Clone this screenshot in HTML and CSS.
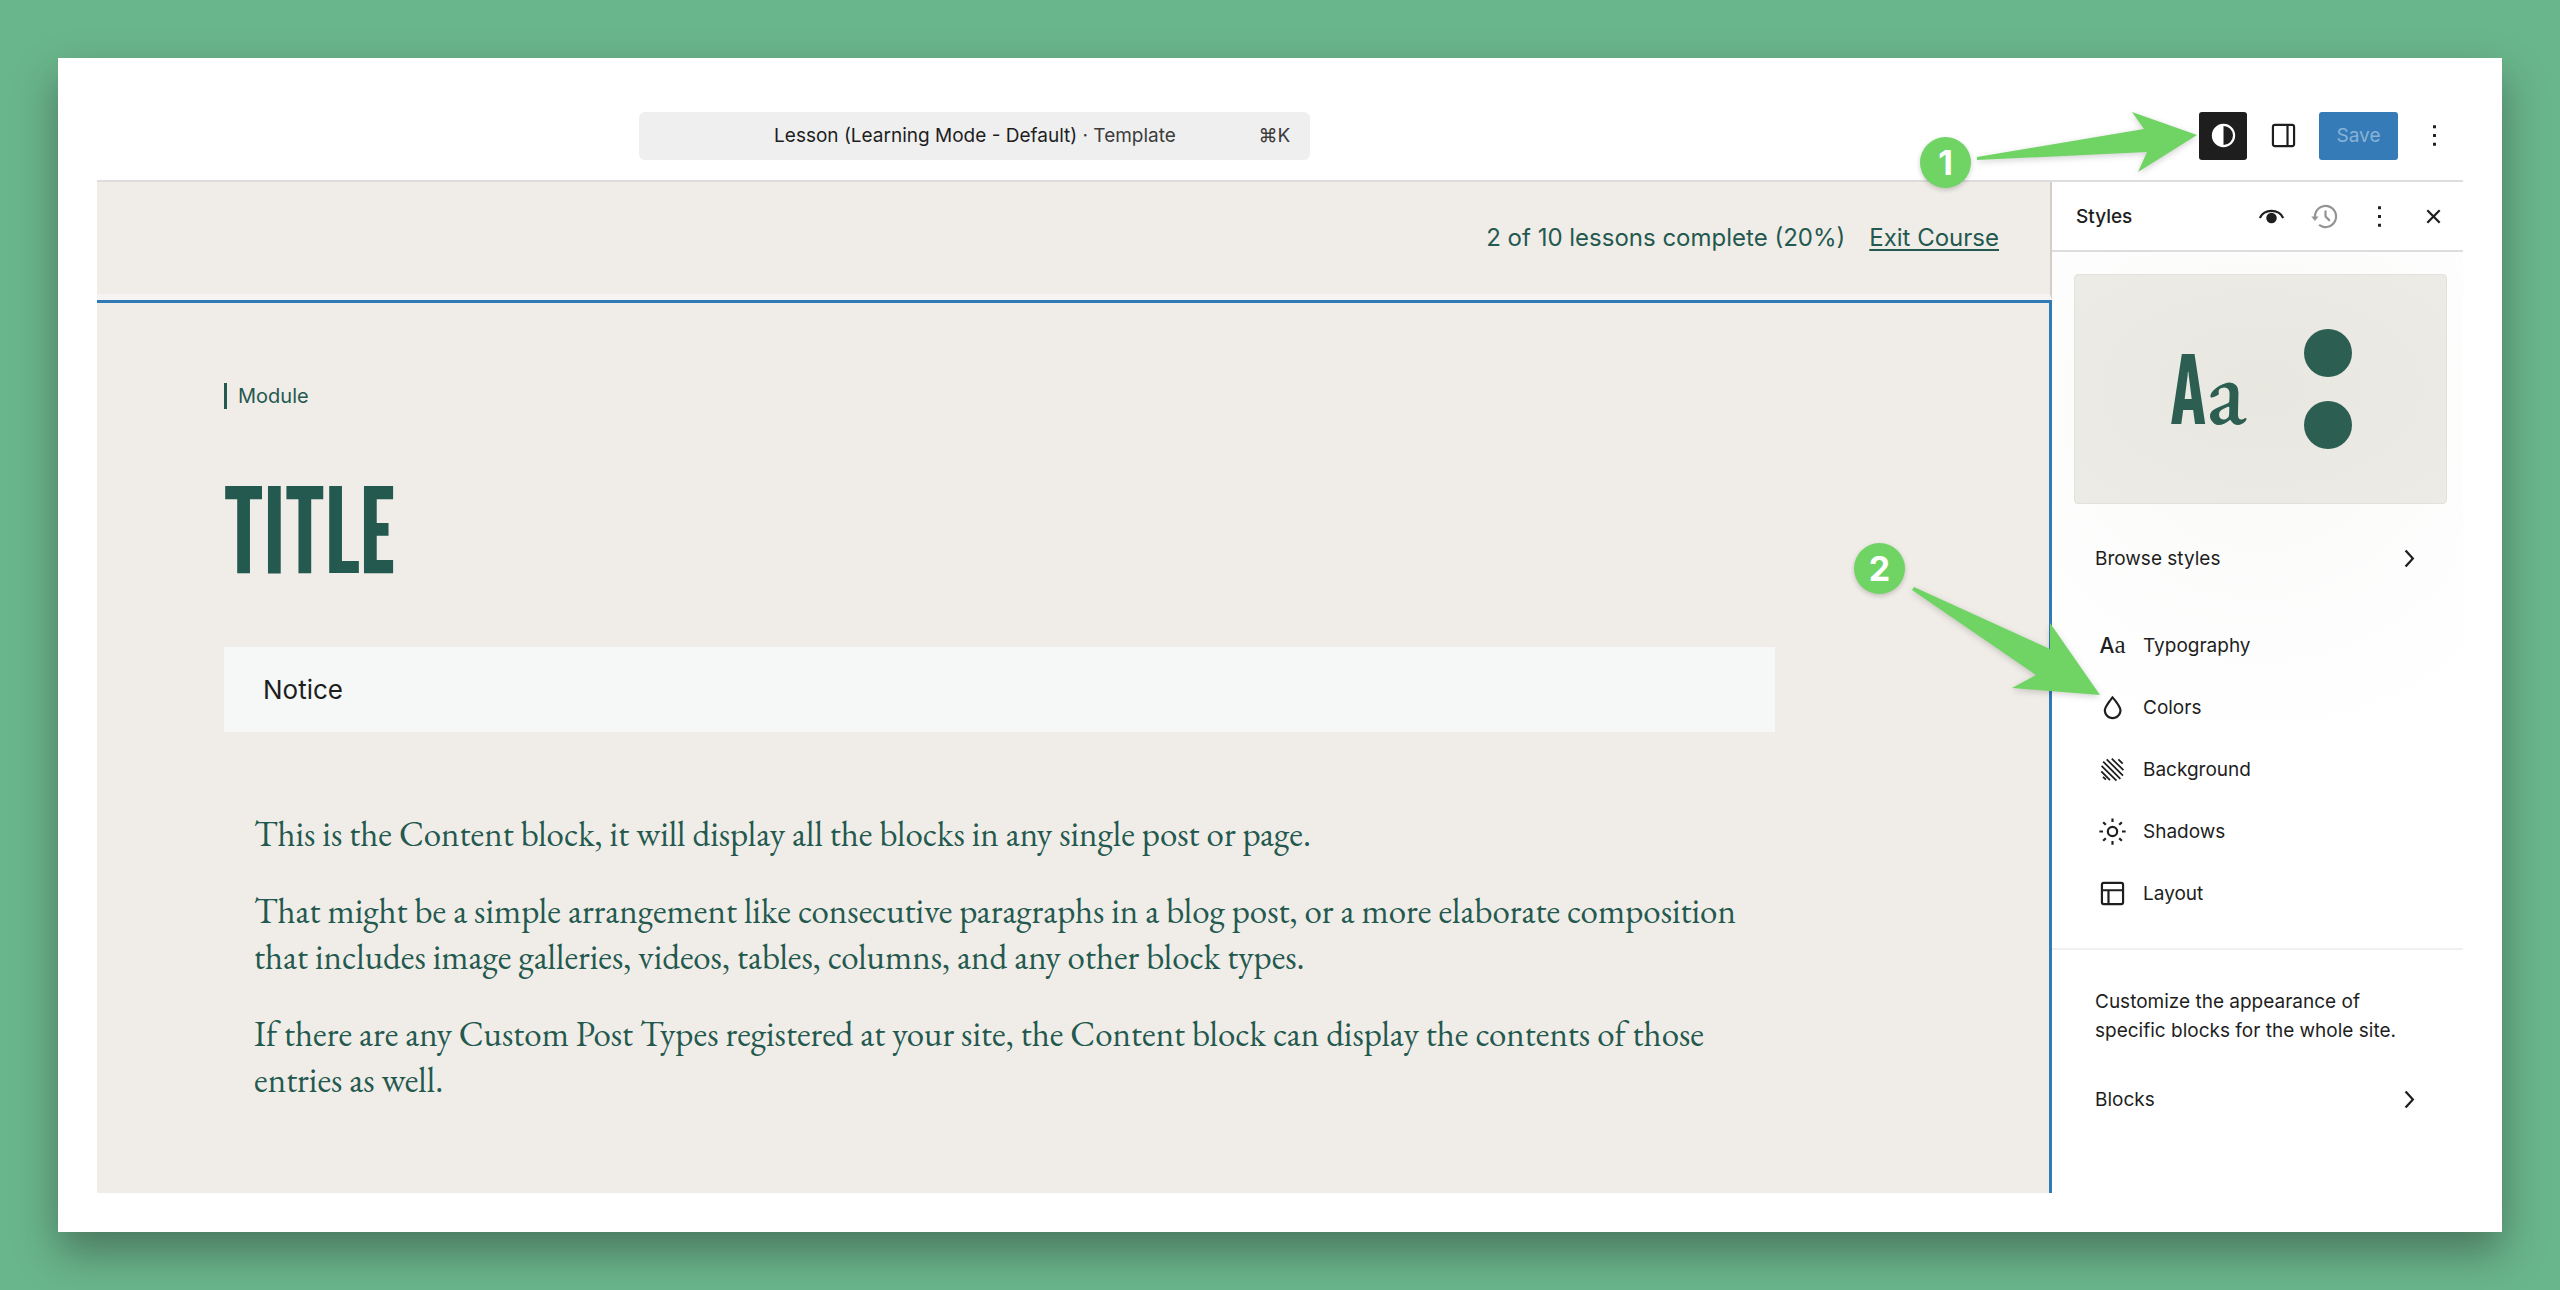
FILE: index.html
```html
<!DOCTYPE html>
<html lang="en">
<head>
  <meta charset="UTF-8">
  <meta name="viewport" content="width=device-width, initial-scale=1">
  <title>Lesson (Learning Mode - Default) · Template</title>
  <link rel="stylesheet" href="styles.css">
</head>
<body>
  <div class="card">
    <header class="topbar">
      <button class="command" type="button">
        <span class="command-title">Lesson (Learning Mode - Default) <span class="muted">· Template</span></span>
        <span class="muted">⌘K</span>
      </button>
      <div class="actions">
        <button class="icon-btn active" type="button" aria-label="Styles">
          <svg class="icon" viewBox="0 0 24 24"><path fill-rule="evenodd" d="M20 12a8 8 0 1 1-16 0 8 8 0 0 1 16 0Zm-1.5 0a6.5 6.5 0 0 1-6.5 6.5v-13a6.5 6.5 0 0 1 6.5 6.5Z"/></svg>
        </button>
        <button class="icon-btn" type="button" aria-label="Settings">
          <svg class="icon" viewBox="0 0 24 24"><path d="M18 4H6c-1.1 0-2 .9-2 2v12c0 1.1.9 2 2 2h12c1.1 0 2-.9 2-2V6c0-1.1-.9-2-2-2zm-4 14.5H6c-.3 0-.5-.2-.5-.5V6c0-.3.2-.5.5-.5h8v13zm4.5-.5c0 .3-.2.5-.5.5h-2.5v-13H18c.3 0 .5.2.5.5v12z"/></svg>
        </button>
        <button class="save" type="button">Save</button>
        <button class="icon-btn" type="button" aria-label="Options">
          <svg class="icon" viewBox="0 0 24 24"><path d="M13 19h-2v-2h2v2zm0-6h-2v-2h2v2zm0-6h-2V5h2v2z"/></svg>
        </button>
      </div>
    </header>

    <div class="editor">
      <main class="canvas">
        <div class="course-bar">
          <span>2 of 10 lessons complete (20%)</span>
          <a href="#">Exit Course</a>
        </div>
        <div class="lesson">
          <p class="module">Module</p>
          <h1 class="title">TITLE</h1>
          <div class="notice">Notice</div>
          <div class="content">
            <p>This is the Content block, it will display all the blocks in any single post or page.</p>
            <p>That might be a simple arrangement like consecutive paragraphs in a blog post, or a more elaborate composition that includes image galleries, videos, tables, columns, and any other block types.</p>
            <p>If there are any Custom Post Types registered at your site, the Content block can display the contents of those entries as well.</p>
          </div>
        </div>
      </main>

      <aside class="sidebar">
        <div class="sidebar-header">
          <h2>Styles</h2>
          <button class="icon-btn" type="button" aria-label="Style Book">
            <svg class="icon" viewBox="0 0 24 24"><path class="line" d="M4 13C5.2 10.6 8 8.2 12 8.2S18.800 10.600 20 13"/><circle cx="12" cy="13" r="3.600"/></svg>
          </button>
          <button class="icon-btn" type="button" aria-label="Revisions" disabled>
            <svg class="icon" viewBox="0 0 24 24"><path d="M5.5 12h1.75l-2.5 3-2.5-3H4a8 8 0 113.134 6.35l.907-1.194A6.5 6.5 0 105.5 12zm9.530 1.970l-2.280-2.280V8.500a.75.75 0 00-1.500 0V12a.747.747 0 00.218.529l2.500 2.500a.75.75 0 101.060-1.060z"/></svg>
          </button>
          <button class="icon-btn" type="button" aria-label="More">
            <svg class="icon" viewBox="0 0 24 24"><path d="M13 19h-2v-2h2v2zm0-6h-2v-2h2v2zm0-6h-2V5h2v2z"/></svg>
          </button>
          <button class="icon-btn" type="button" aria-label="Close Styles">
            <svg class="icon" viewBox="0 0 24 24"><path d="M12 13.060l3.712 3.713 1.061-1.060L13.061 12l3.712-3.712-1.060-1.060L12 10.938 8.288 7.227l-1.061 1.060L10.939 12l-3.712 3.712 1.060 1.061L12 13.061z"/></svg>
          </button>
        </div>

        <div class="styles-root">
          <div class="preview">
            <div class="preview-text"><span class="big-a">A</span><span class="small-a">a</span></div>
            <div class="swatches"><span></span><span></span></div>
          </div>
          <button class="row" type="button">
            Browse styles
            <svg class="icon" viewBox="0 0 24 24"><path d="M10.600 6L9.400 7l4.600 5-4.600 5 1.200 1 5.400-6z"/></svg>
          </button>
          <nav class="menu">
            <button class="item" type="button">
              <span class="type-icon" aria-hidden="true">A<span>a</span></span>
              Typography
            </button>
            <button class="item" type="button">
              <svg class="icon" viewBox="0 0 24 24"><path d="M17.200 10.900c-.5-1-1.200-2.100-2.100-3.200-.6-.9-1.300-1.700-2.100-2.600L12 4l-1 1.100c-.6.9-1.300 1.700-2 2.600-.8 1.200-1.500 2.300-2 3.200-.6 1.200-1 2.200-1 3 0 3.400 2.700 6.100 6.100 6.100s6.100-2.700 6.100-6.100c0-.8-.3-1.800-1-3zm-5.100 7.600c-2.500 0-4.600-2.100-4.600-4.600 0-.3.1-1 .8-2.300.5-.9 1.100-1.900 2-3.100.7-.9 1.300-1.700 1.800-2.300.7.8 1.300 1.600 1.800 2.300.8 1.100 1.500 2.200 2 3.100.7 1.300.8 2 .8 2.300 0 2.500-2.100 4.600-4.600 4.600z"/></svg>
              Colors
            </button>
            <button class="item" type="button">
              <svg class="icon thin" viewBox="0 0 24 24"><path class="line" d="M16 5l3 3M11.500 4.500l8 8M8 5l11.200 11.200M5.600 6.600l11.800 11.800M4.500 9.500l10.200 10.200M4.300 13.300l6 6M5.500 17l2 2"/></svg>
              Background
            </button>
            <button class="item" type="button">
              <svg class="icon" viewBox="0 0 24 24"><circle class="line" cx="12" cy="12" r="3.200"/><path class="line" d="M12 3v2.500M12 18.500V21M3 12h2.500M18.500 12H21M5.600 5.600l1.800 1.800M16.600 16.600l1.800 1.800M5.600 18.400l1.800-1.800M16.600 7.400l1.800-1.800"/></svg>
              Shadows
            </button>
            <button class="item" type="button">
              <svg class="icon" viewBox="0 0 24 24"><path d="M18 5.500H6a.5.5 0 00-.5.5v3h13V6a.5.5 0 00-.5-.5zm.5 5H10v8h8a.5.5 0 00.5-.5v-7.500zm-10 0h-3V18a.5.5 0 00.5.5h2.500v-8zM6 4h12a2 2 0 012 2v12a2 2 0 01-2 2H6a2 2 0 01-2-2V6a2 2 0 012-2z"/></svg>
              Layout
            </button>
          </nav>
        </div>

        <div class="blocks">
          <p>Customize the appearance of specific blocks for the whole site.</p>
          <button class="row" type="button">
            Blocks
            <svg class="icon" viewBox="0 0 24 24"><path d="M10.600 6L9.400 7l4.600 5-4.600 5 1.200 1 5.400-6z"/></svg>
          </button>
        </div>
      </aside>
    </div>

    <!-- walkthrough steps -->
    <span class="step step-one">1</span>
    <svg class="arrow arrow-one" viewBox="0 0 220 60"><path d="M0 45L167 17 155 0 220 23 161 60 170 40 0 48z"/></svg>
    <span class="step step-two">2</span>
    <svg class="arrow arrow-two" viewBox="0 0 188 108"><path d="M2 0L138 62V36L188 108 100 101 124 88 0 3z"/></svg>
  </div>
</body>
</html>
```
FILE: styles.css
```css
* { box-sizing: border-box; }
body { margin: 0; padding: 58px; background: #6ab68c; color: #1e1e1e; font: 19px/29px Inter, "Liberation Sans", sans-serif; }
h1, h2, p { margin: 0; }
button { padding: 0; border: 0; background: none; color: inherit; font: inherit; cursor: pointer; }

.card { position: relative; display: flex; flex-direction: column; min-height: calc(100vh - 116px); padding: 39px; background: #fff; box-shadow: 0 20px 40px rgba(30,30,30,0.42); }

/* Top bar */
.topbar { display: grid; grid-template-columns: 8fr 671px 17fr; align-items: center; height: 85px; padding-bottom: 6px; border-bottom: 2px solid #ddd; }
.command { grid-column: 2; display: flex; align-items: center; height: 48px; padding: 0 20px; border-radius: 6px; background: #efefef; }
.command-title { flex: 1; padding-left: 32px; }
.muted { color: #3c3c3c; }
.actions { display: flex; justify-content: flex-end; align-items: center; gap: 12px; padding-right: 5px; }
.icon-btn { display: flex; align-items: center; justify-content: center; width: 48px; height: 48px; border-radius: 3px; }
.icon-btn.active { background: #1e1e1e; color: #fff; }
.icon-btn:disabled { color: #949494; }
.icon { flex: none; width: 35px; height: 35px; fill: currentColor; }
.line { fill: none; stroke: currentColor; stroke-width: 1.5; }
.thin .line { stroke-width: 1.2; }
.save { width: 79px; height: 48px; border-radius: 3px; background: #347bb7; color: #8ab2d6; }

/* Canvas */
.editor { flex: 1; display: flex; }
.canvas { flex: 1; display: flex; flex-direction: column; background: #f0ede8; color: #24594f; }
.course-bar { display: flex; align-items: center; justify-content: flex-end; gap: 24px; height: 118px; padding: 0 51px 2px 0; border-right: 2px solid #d2cec9; border-bottom: 6px solid #f5f4f2; font-size: 24px; }
.course-bar a { color: inherit; text-decoration-thickness: 2px; text-underline-offset: 3px; }
.lesson { flex: 1; padding: 80px 274px 80px 127px; border-top: 3px solid #327ab6; border-right: 3px solid #327ab6; }
.module { padding-left: 11px; border-left: 3px solid #24594f; font-size: 20px; line-height: 26px; }
.title { margin-top: 58px; font: 400 118px/126px "League Gothic", "Bebas Neue", Oswald, "Liberation Sans", sans-serif; }
.notice { margin-top: 54px; padding: 0 39px; background: #f6f8f7; color: #1e1e1e; font-size: 26px; line-height: 85px; }
.content { margin-top: 79px; padding: 0 28px 0 30px; font: 35px/46px "EB Garamond", "Liberation Serif", serif; }
.content p + p { margin-top: 31px; }

/* Styles sidebar */
.sidebar { width: 411px; }
.sidebar-header { display: flex; align-items: center; gap: 6px; height: 70px; padding: 0 6px 0 24px; border-bottom: 2px solid #ddd; }
.sidebar-header h2 { flex: 1; font-size: 19px; font-weight: 500; }
.styles-root { padding: 22px 16px 24px 22px; border-bottom: 2px solid #f0f0f0; background: radial-gradient(circle at 50% 22%, #f9faf8, #fff 62%); }
.preview { display: flex; align-items: center; justify-content: center; gap: 36px; height: 230px; border: 1px solid #e0e0dc; border-radius: 4px; background: radial-gradient(ellipse, #e8e7e0, #ecebe6); color: #2c5e52; }
.preview-text { display: flex; align-items: baseline; width: 98px; }
.big-a { font: 400 96px/120px "League Gothic", "Bebas Neue", Oswald, "Liberation Sans", sans-serif; }
.small-a { font: 500 96px/120px "EB Garamond", "Liberation Serif", serif; }
.swatches { display: grid; gap: 24px; }
.swatches span { width: 48px; height: 48px; border-radius: 50%; background: #2c5e52; }
.row { display: flex; align-items: center; justify-content: space-between; width: 100%; height: 58px; padding: 0 21px; text-align: left; }
.styles-root .row { margin-top: 25px; }
.menu { margin-top: 27px; }
.item { display: flex; align-items: center; gap: 13px; width: 100%; height: 62px; padding: 0 21px; text-align: left; }
.type-icon { width: 35px; font-size: 21px; font-weight: 500; text-align: center; }
.type-icon span { font-family: "Liberation Serif", serif; font-size: 25px; }
.blocks { padding: 37px 16px 22px 22px; }
.blocks p { padding: 0 21px; }
.blocks .row { margin-top: 25px; }

/* Numbered steps */
.step { position: absolute; width: 51px; height: 51px; border-radius: 50%; background: #70d465; color: #fff; font-size: 34px; font-weight: 700; line-height: 51px; text-align: center; box-shadow: 0 2px 5px rgba(0,0,0,0.2); }
.step-one { top: 79px; right: 531px; }
.step-two { top: 485px; right: 597px; }
.arrow { position: absolute; fill: #70d465; filter: drop-shadow(0 2px 3px rgba(0,0,0,0.18)); }
.arrow-one { top: 54px; right: 305px; width: 220px; }
.arrow-two { top: 529px; right: 402px; width: 188px; }
```
